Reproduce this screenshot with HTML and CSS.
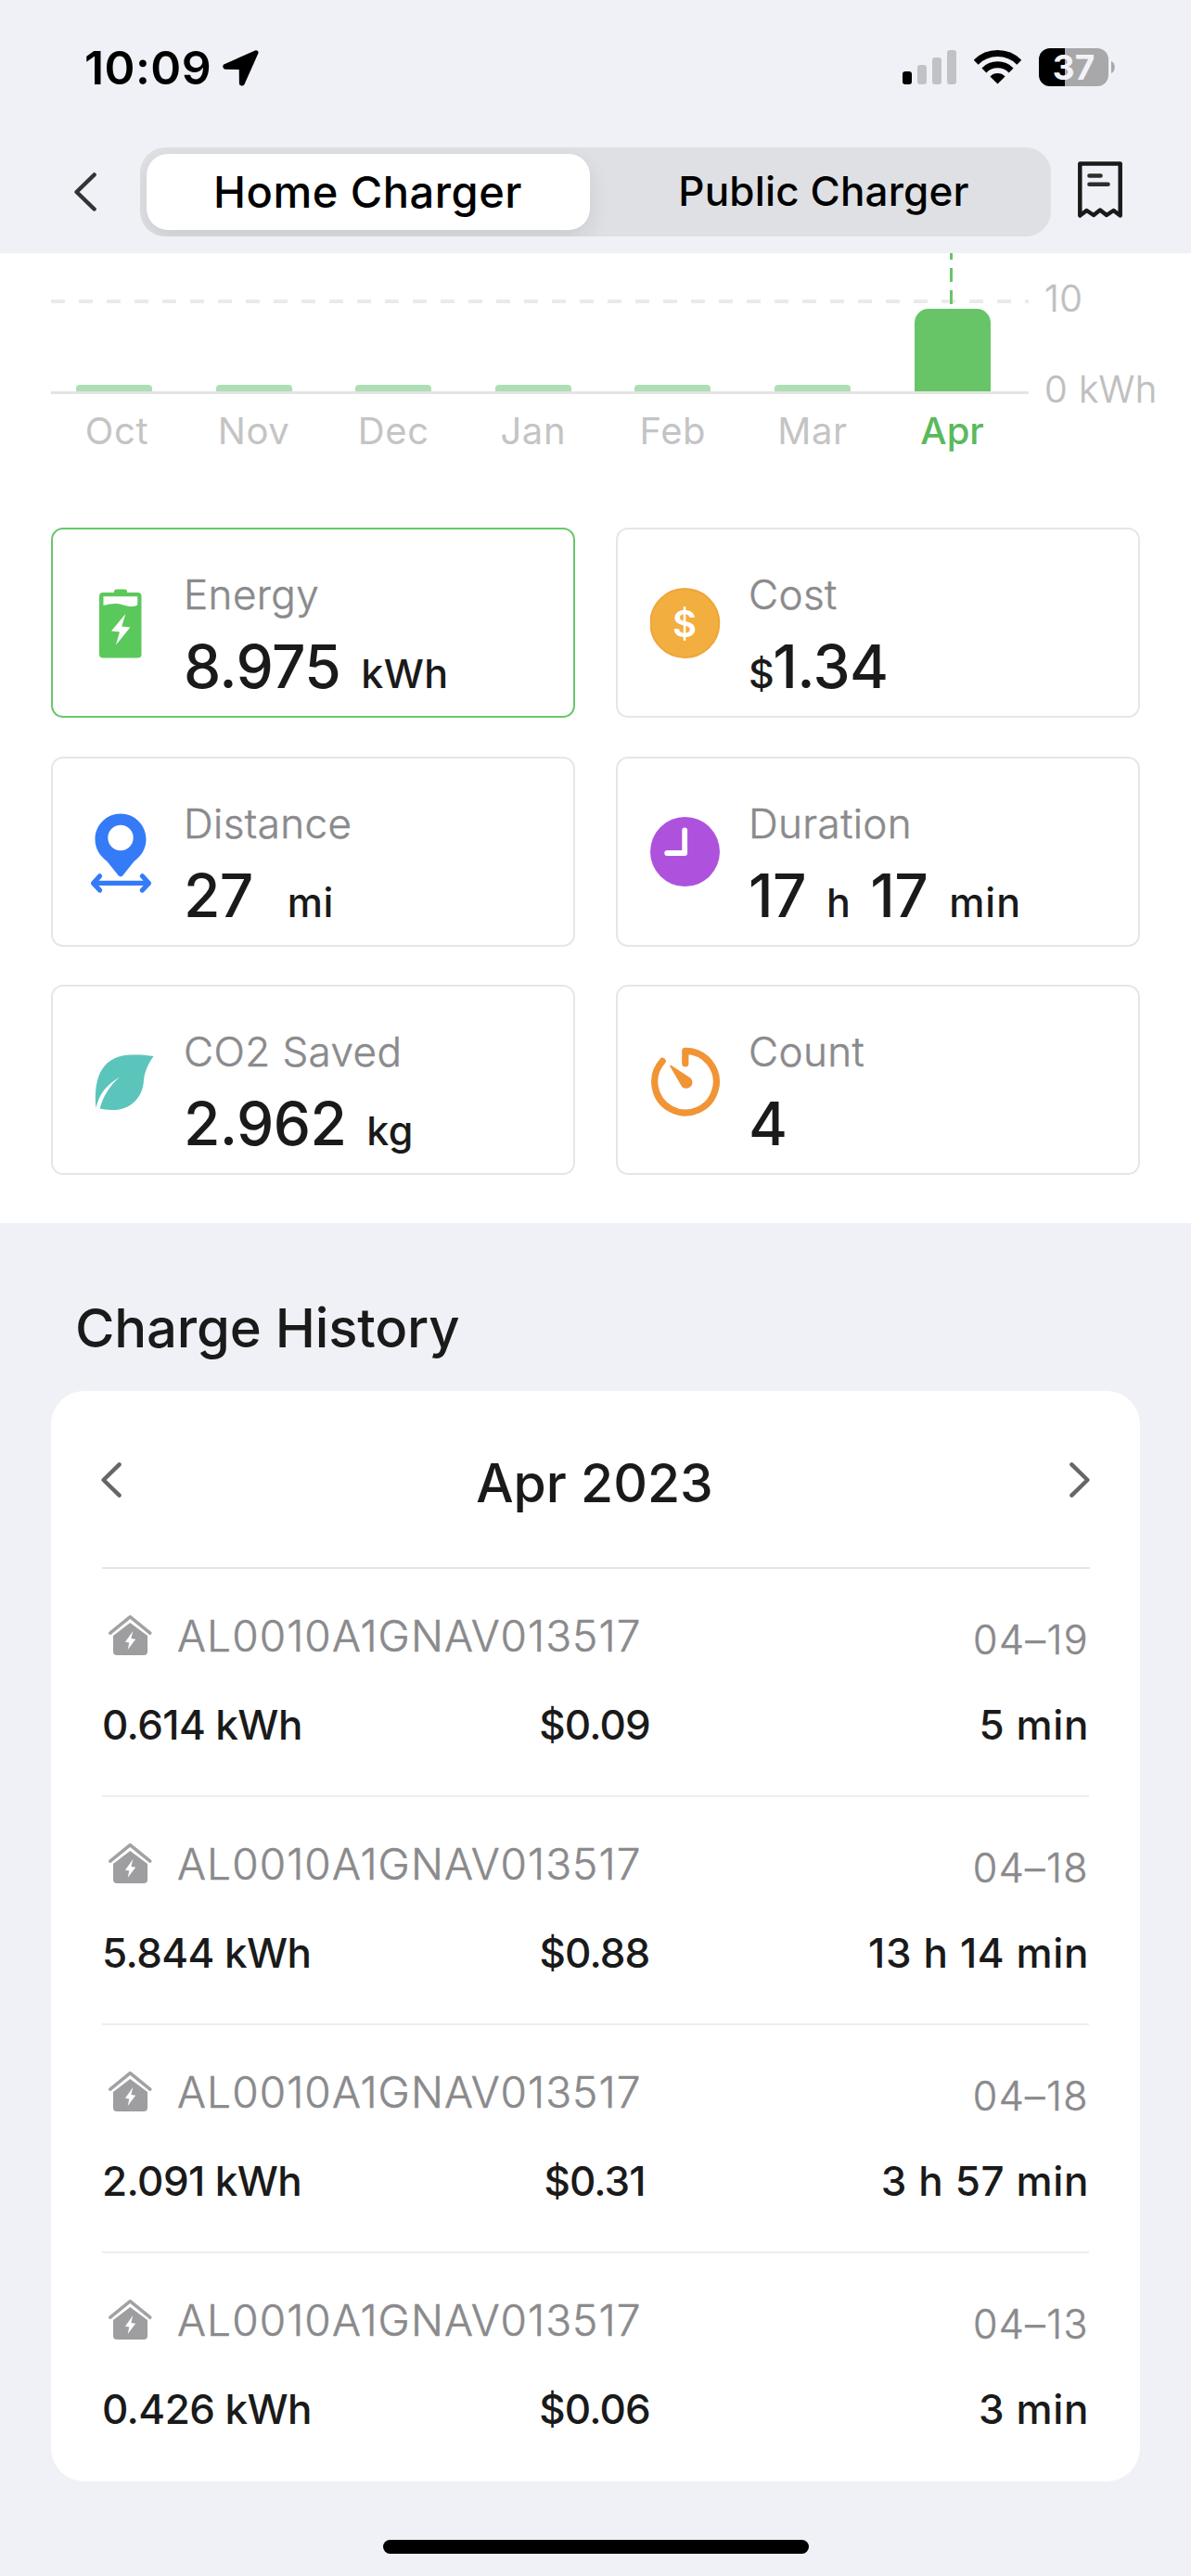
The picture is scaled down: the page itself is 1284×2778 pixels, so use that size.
FILE: index.html
```
<!DOCTYPE html>
<html lang="en">
<head>
  <meta charset="utf-8"/>
  <meta name="viewport" content="width=device-width, initial-scale=1.0"/>
  <title>Charge Statistics</title>
  <link rel="stylesheet" href="styles.css">
</head>
<body>
  <!-- icons shared by several rows -->
  <svg class="defs" width="0" height="0">
    <symbol id="house" viewBox="0 0 50 46">
      <path d="M2.8 20.2 24.3 2.6 45.8 20.2" fill="none" stroke="#a2a2a4" stroke-width="3.6" stroke-linecap="round" stroke-linejoin="round"/>
      <path d="M24.3 9 43 23V40a4 4 0 0 1-4 4H10a4 4 0 0 1-4-4V23Z" fill="#9e9ea0"/>
      <path d="M27.3 18 19 29.8 23.3 30.5 21.7 38 30.2 26.8 25.4 26Z" fill="#fff"/>
    </symbol>
  </svg>

  <header class="top">
    <div class="status">
      <span class="time">10:09</span>
      <svg class="location" width="39" height="39" viewBox="0 0 39 39"><path d="M36 2.8 2.8 17.6 3 18.3 20.2 18.6 20.4 36 21.2 36Z" stroke="#000" stroke-width="5" stroke-linejoin="round"/></svg>
      <svg class="signal" width="58" height="37" viewBox="0 0 58 37">
        <rect x="0" y="23" width="10" height="14" rx="3"/>
        <g fill="#c1c2c6"><rect x="16" y="16" width="10" height="21" rx="3"/><rect x="32" y="8" width="10" height="29" rx="3"/><rect x="48" y="0" width="10" height="37" rx="3"/></g>
      </svg>
      <svg width="51" height="37" viewBox="0 0 51 37">
        <g fill="none" stroke="#000" stroke-width="7"><path d="M2.2 13.2A33 33 0 0 1 48.8 13.2"/><path d="M10.9 21.9A20.7 20.7 0 0 1 40.1 21.9"/></g>
        <path d="M25.5 36.5 17.4 28.4A11.5 11.5 0 0 1 33.6 28.4Z"/>
      </svg>
      <svg width="82" height="53" viewBox="0 -6 82 53">
        <path d="M28 0H63a12 12 0 0 1 12 12V29a12 12 0 0 1-12 12H28Z" fill="#a8a8aa"/>
        <path d="M28 0H12A12 12 0 0 0 0 12V29A12 12 0 0 0 12 41H28Z"/>
        <path d="M78 14C83 16 83 25 78 27Z" fill="#a8a8aa"/>
        <text class="level" x="37.5" y="34">37</text>
      </svg>
    </div>
    <nav class="nav">
      <svg width="24" height="42" viewBox="0 0 24 42"><path d="M21.6 2.5 2.6 21 21.6 39.5" fill="none" stroke="#333" stroke-width="4.5" stroke-linecap="round" stroke-linejoin="round"/></svg>
      <div class="tabs">
        <div class="tab active">Home Charger</div>
        <div class="tab">Public Charger</div>
      </div>
      <svg class="receipt" width="48" height="61" viewBox="0 0 48 61">
        <path d="M2.3 58.5V2.5H45.7V58.5L38.5 53 31 58 24 52.5 17 58 9.5 53Z" fill="none" stroke="#1a1a1a" stroke-width="4.5" stroke-linejoin="round"/>
        <path d="M12.5 15.5H24.5M12.5 24.7H32.5" stroke="#2e2e2e" stroke-width="4.6" stroke-linecap="round"/>
      </svg>
    </nav>
  </header>

  <section class="stats">
    <div class="chart">
      <div class="chart-main">
        <div class="plot">
          <div class="bar"></div><div class="bar"></div><div class="bar"></div><div class="bar"></div><div class="bar"></div><div class="bar"></div>
          <div class="bar current"><div class="marker"></div></div>
        </div>
        <div class="months">
          <span>Oct</span><span>Nov</span><span>Dec</span><span>Jan</span><span>Feb</span><span>Mar</span><span class="current">Apr</span>
        </div>
      </div>
      <div class="scale"><span>10</span><span>0 kWh</span></div>
    </div>

    <div class="cards">
      <div class="card selected">
        <svg width="76" height="96" viewBox="0 0 76 96">
          <rect x="31" y="11.5" width="14" height="8" rx="2.5" fill="#5bc85c"/>
          <rect x="15" y="15" width="45.5" height="70.5" rx="4" fill="#5bc85c"/>
          <path d="M19.5 19.3H56.3V28.5C51 31 46 30 41 28.5 33 26 27 27 19.5 29Z" fill="#fff"/>
          <path d="M43.4 38 28 56.6 37 57.4 33 71.5 48.4 52.4 39.2 51.6Z" fill="#fff"/>
        </svg>
        <div class="info">
          <div class="label">Energy</div>
          <div class="value">8.975<small>kWh</small></div>
        </div>
      </div>
      <div class="card">
        <svg width="76" height="96" viewBox="0 0 76 96">
          <circle cx="37.3" cy="48" r="37" fill="#f2ae3e" stroke="#f0a538" stroke-width="2"/>
          <text class="coin" x="37" y="63">$</text>
        </svg>
        <div class="info">
          <div class="label">Cost</div>
          <div class="value"><small class="currency">$</small>1.34</div>
        </div>
      </div>
      <div class="card">
        <svg width="76" height="96" viewBox="0 0 76 96">
          <path fill-rule="evenodd" d="M38 6.5C53 6.5 65.5 18.5 65.5 34 65.5 45 60 52 52.5 58L40.3 73.3Q38 75.5 35.7 73.3L23.5 58C16 52 10.5 45 10.5 34 10.5 18.5 23 6.5 38 6.5ZM38 18.8A13.7 13.7 0 1 0 38 46.2 13.7 13.7 0 1 0 38 18.8Z" fill="#357bf7"/>
          <path d="M15.6 73.8 8.5 81.4 15.6 89M61.4 73.8 68.5 81.4 61.4 89M9 81.4H68" fill="none" stroke="#357bf7" stroke-width="5.2" stroke-linecap="round" stroke-linejoin="round"/>
        </svg>
        <div class="info">
          <div class="label">Distance</div>
          <div class="value">27<small class="wide">mi</small></div>
        </div>
      </div>
      <div class="card">
        <svg width="76" height="96" viewBox="0 0 76 96">
          <circle cx="37.5" cy="47.5" r="37.5" fill="#ae52de"/>
          <path d="M37.2 24.4V49H18.2" fill="none" stroke="#fff" stroke-width="5.8" stroke-linecap="round" stroke-linejoin="round"/>
        </svg>
        <div class="info">
          <div class="label">Duration</div>
          <div class="value">17<small class="hours">h</small>17<small class="minutes">min</small></div>
        </div>
      </div>
      <div class="card">
        <svg width="76" height="96" viewBox="0 0 76 96">
          <path d="M73.5 22C68 30 64 38 63 48 62 68 47 81 28 80 23 80 19 79 15.7 78.5 19 65 27 53 37 44.5 24 52 15 62 11.5 78 8 42 20 20 52 20.5 60 20.3 67 21 73.5 22Z" fill="#5bc5bb"/>
        </svg>
        <div class="info">
          <div class="label">CO2 Saved</div>
          <div class="value">2.962<small>kg</small></div>
        </div>
      </div>
      <div class="card">
        <svg width="76" height="96" viewBox="0 0 76 96">
          <path d="M37.8 30V16.3A33.3 33.3 0 1 1 13.2 27.4" fill="none" stroke="#f19436" stroke-width="7.2" stroke-linecap="round" stroke-linejoin="round"/>
          <path d="M21 32.6Q21.4 31.4 22.8 32L43.4 45.5A6.6 6.6 0 1 1 34.2 55Z" fill="#f19436"/>
        </svg>
        <div class="info">
          <div class="label">Count</div>
          <div class="value">4</div>
        </div>
      </div>
    </div>
  </section>

  <section class="history">
    <h2>Charge History</h2>
    <div class="list">
      <div class="month-nav">
        <svg width="22" height="38" viewBox="0 0 22 38"><path d="M19.6 2.4 2.6 19 19.6 35.6" fill="none" stroke="#666" stroke-width="4.4" stroke-linecap="round" stroke-linejoin="round"/></svg>
        <span class="month">Apr 2023</span>
        <svg width="22" height="38" viewBox="0 0 22 38"><path d="M2.4 2.4 19.4 19 2.4 35.6" fill="none" stroke="#666" stroke-width="4.4" stroke-linecap="round" stroke-linejoin="round"/></svg>
      </div>
      <div class="row">
        <div class="device"><svg width="50" height="46"><use href="#house"/></svg><span class="serial">AL0010A1GNAV013517</span><span class="date">04–19</span></div>
        <div class="figures"><span>0.614 kWh</span><span class="price">$0.09</span><span class="length">5 min</span></div>
      </div>
      <div class="row">
        <div class="device"><svg width="50" height="46"><use href="#house"/></svg><span class="serial">AL0010A1GNAV013517</span><span class="date">04–18</span></div>
        <div class="figures"><span>5.844 kWh</span><span class="price">$0.88</span><span class="length">13 h 14 min</span></div>
      </div>
      <div class="row">
        <div class="device"><svg width="50" height="46"><use href="#house"/></svg><span class="serial">AL0010A1GNAV013517</span><span class="date">04–18</span></div>
        <div class="figures"><span>2.091 kWh</span><span class="price">$0.31</span><span class="length">3 h 57 min</span></div>
      </div>
      <div class="row">
        <div class="device"><svg width="50" height="46"><use href="#house"/></svg><span class="serial">AL0010A1GNAV013517</span><span class="date">04–13</span></div>
        <div class="figures"><span>0.426 kWh</span><span class="price">$0.06</span><span class="length">3 min</span></div>
      </div>
    </div>
  </section>
  <div class="home-indicator"></div>
</body>
</html>
```
FILE: styles.css
```
* { box-sizing:border-box; }
body { background:#f0f1f6; color:#1a1a1a; font-family:Inter, "Liberation Sans", sans-serif; margin:0; height:2778px; overflow:hidden; }
svg { display:block; flex:none; }
.defs { position:absolute; }

.top { height:273px; color:#000; }
.status { height:145px; display:flex; align-items:center; padding:0 82px 0 91px; }
.time { font-size:50px; font-weight:600; line-height:60px; letter-spacing:0.4px; margin-top:1px; }
.location { margin-left:12px; margin-top:2px; }
.signal { margin-left:auto; }
.status svg + svg + svg { margin-left:19px; }
.level { font-size:37px; font-weight:700; fill:#f2f3f7; text-anchor:middle; }

.nav { height:124px; display:flex; align-items:center; padding-left:80px; }
.tabs { display:flex; width:982px; height:96px; padding:7px; margin-left:47px; background:#dfe0e4; border-radius:27px; overflow:hidden; }
.tab { flex:1; line-height:81px; text-align:center; font-size:44px; font-weight:500; letter-spacing:0.15px; padding-left:14px; }
.tab.active { flex:none; width:478px; line-height:82px; padding:0 1px 0 0; font-size:47px; letter-spacing:0.5px; background:#fff; border-radius:23px; box-shadow:0 9px 24px rgba(0,0,0,0.09); }
.receipt { margin-left:29px; margin-bottom:5px; }

.stats { background:#fff; height:1046px; }
.chart { display:flex; padding-left:55px; height:296px; }
.chart-main { width:1054px; }
.plot { height:152px; border-bottom:3px solid #e3e3e3; display:flex; align-items:flex-end; gap:68.6px; padding-left:27px; background:repeating-linear-gradient(90deg, #eaeaea 0 15px, transparent 15px 30px) 0 50px / 100% 4px no-repeat; }
.bar { width:82px; height:7px; background:#addfb4; border-radius:4px 4px 0 0; flex:none; }
.bar.current { height:89px; background:#67c567; border-radius:15px 15px 0 0; position:relative; }
.marker { position:absolute; left:38px; bottom:94px; width:3px; height:55px; background:repeating-linear-gradient(180deg, #67c567 0 15px, transparent 15px 24px) 0 -8px / 100% 72px; }
.months { display:flex; gap:68.6px; padding-left:27px; margin-top:16px; font-size:40px; line-height:48px; letter-spacing:0.6px; color:#c4c4c4; }
.months span { width:82px; flex:none; text-align:center; white-space:nowrap; }
.months span:first-child { padding-left:6px; }
.months .current { color:#5bb95d; font-weight:500; letter-spacing:0; }
.scale { display:flex; flex-direction:column; gap:50px; padding:25px 0 0 17px; font-size:40px; line-height:48px; font-weight:300; letter-spacing:0.5px; color:#bfbfbf; -webkit-text-stroke:0.5px #bfbfbf; }

.cards { display:grid; grid-template-columns:1fr 1fr; gap:41.5px 44px; padding:0 55px; }
.card { display:flex; align-items:flex-start; height:205px; border:2px solid #e6e6e6; border-radius:13px; padding:42px 0 0 35px; }
.card.selected { border-color:#67c86a; }
.card svg { margin-top:11px; }
.info { margin-left:30px; }
.label { font-size:44px; line-height:56px; font-weight:300; letter-spacing:0.4px; color:#8a8a8c; -webkit-text-stroke:0.5px #8a8a8c; }
.value { font-size:64px; line-height:80px; font-weight:500; letter-spacing:-0.6px; margin-top:10px; white-space:nowrap; }
.value small { font-size:43px; letter-spacing:0.4px; margin-left:22px; }
.value .currency { margin:0; letter-spacing:-1.5px; }
.value .wide { margin-left:37px; }
.value .hours { margin-right:21px; }
.value .minutes { letter-spacing:1px; margin-left:23px; }
.coin { font-size:40px; font-weight:600; fill:#fff; text-anchor:middle; }

h2 { font-size:58px; font-weight:500; line-height:81px; letter-spacing:-0.2px; margin:0; padding:73px 0 27px 81px; }
.list { background:#fff; border-radius:36px; margin:0 55px; height:1176px; padding:0 55px; }
.month-nav { height:192px; display:flex; align-items:center; justify-content:space-between; border-bottom:2px solid #e5e5e5; margin:0 -1px 0 0; }
.month { font-size:57px; font-weight:500; line-height:70px; padding:10px 2px 0 0; }
.month-nav svg { margin-top:2px; }
.month-nav svg:first-child { margin-left:-1px; }
.row { height:246px; padding-top:44px; border-bottom:2px solid #eee; }
.row:last-child { border-bottom:none; }
.device { display:flex; align-items:center; height:56px; padding-left:6px; color:#8a8a8c; font-weight:300; -webkit-text-stroke:0.5px #8a8a8c; }
.device svg { -webkit-text-stroke:0; }
.serial { font-size:46px; letter-spacing:1.1px; margin-left:25px; }
.date { font-size:43px; letter-spacing:1.4px; margin-left:auto; padding-top:8px; }
.figures { display:grid; grid-template-columns:1fr auto 1fr; margin-top:38px; font-size:44px; line-height:60px; font-weight:500; letter-spacing:-0.6px; padding-right:2px; }
.price { letter-spacing:-0.9px; }
.length { text-align:right; letter-spacing:0.6px; margin-right:-2px; }

.home-indicator { width:459px; height:15px; border-radius:8px; background:#000; margin:63px auto 0; }
```
